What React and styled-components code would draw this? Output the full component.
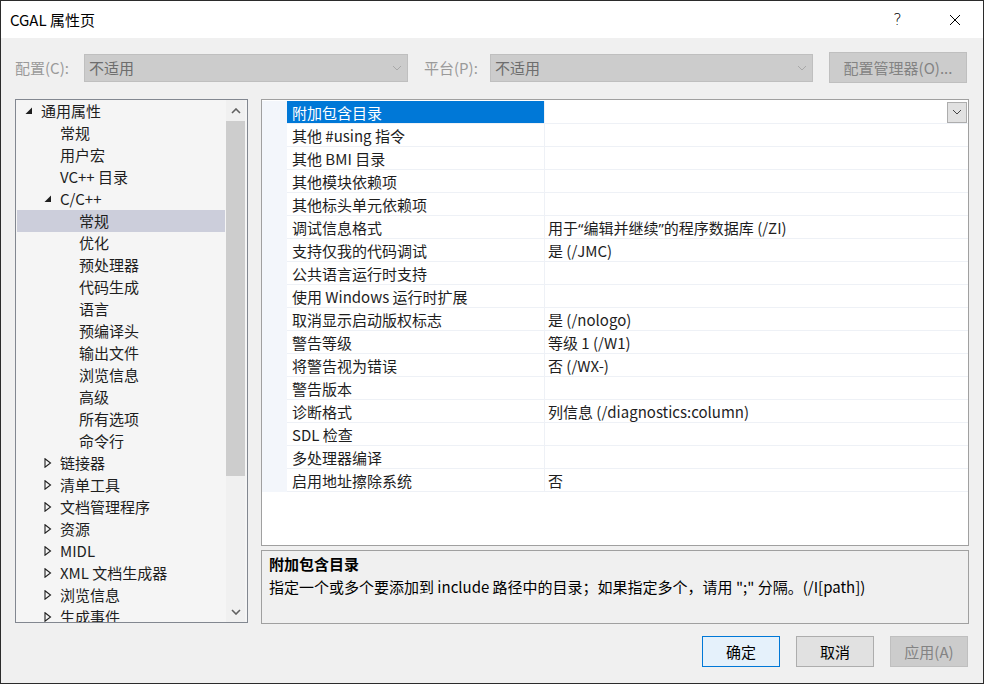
import React from "react";
import styled, { createGlobalStyle } from "styled-components";

const GlobalStyle = createGlobalStyle`
  html, body { margin: 0; padding: 0; }
  body {
    width: 984px;
    height: 684px;
    overflow: hidden;
    background: #f0f0f0;
    font-family: "Noto Sans CJK SC", "Noto Sans", sans-serif;
  }
`;

const treeItems = [
    { text: "通用属性", level: 0, arrow: "open" },
    { text: "常规", level: 1 },
    { text: "用户宏", level: 1 },
    { text: "VC++ 目录", level: 1 },
    { text: "C/C++", level: 1, arrow: "open" },
    { text: "常规", level: 2, selected: true },
    { text: "优化", level: 2 },
    { text: "预处理器", level: 2 },
    { text: "代码生成", level: 2 },
    { text: "语言", level: 2 },
    { text: "预编译头", level: 2 },
    { text: "输出文件", level: 2 },
    { text: "浏览信息", level: 2 },
    { text: "高级", level: 2 },
    { text: "所有选项", level: 2 },
    { text: "命令行", level: 2 },
    { text: "链接器", level: 1, arrow: "closed" },
    { text: "清单工具", level: 1, arrow: "closed" },
    { text: "文档管理程序", level: 1, arrow: "closed" },
    { text: "资源", level: 1, arrow: "closed" },
    { text: "MIDL", level: 1, arrow: "closed" },
    { text: "XML 文档生成器", level: 1, arrow: "closed" },
    { text: "浏览信息", level: 1, arrow: "closed" },
    { text: "生成事件", level: 1, arrow: "closed" },
];

const Q = styled.span`
    font-family: "Noto Sans", sans-serif;
`;

const props = [
    ["附加包含目录", ""],
    ["其他 #using 指令", ""],
    ["其他 BMI 目录", ""],
    ["其他模块依赖项", ""],
    ["其他标头单元依赖项", ""],
    ["调试信息格式", <>用于<Q>“</Q>编辑并继续<Q>”</Q>的程序数据库 (/ZI)</>],
    ["支持仅我的代码调试", "是 (/JMC)"],
    ["公共语言运行时支持", ""],
    ["使用 Windows 运行时扩展", ""],
    ["取消显示启动版权标志", "是 (/nologo)"],
    ["警告等级", "等级 1 (/W1)"],
    ["将警告视为错误", "否 (/WX-)"],
    ["警告版本", ""],
    ["诊断格式", "列信息 (/diagnostics:column)"],
    ["SDL 检查", ""],
    ["多处理器编译", ""],
    ["启用地址擦除系统", "否"],
];

const Chevron = ({ up, color = "#606060", w = 10, h = 6, sw = 1.6 }) => (
    <svg width={w} height={h} viewBox="0 0 10 6">
        <polyline
            points={up ? "1,5 5,1 9,5" : "1,1 5,5 9,1"}
            fill="none"
            stroke={color}
            strokeWidth={sw}
        />
    </svg>
);

const TreeArrow = ({ type }) =>
    type === "open" ? (
        <svg width="8" height="8" viewBox="0 0 8 8">
            <polygon points="7,0.5 7,7 0.5,7" fill="#1e1e1e" />
        </svg>
    ) : (
        <svg width="8" height="10" viewBox="0 0 8 10">
            <polygon points="1,0.8 6.5,5 1,9.2" fill="none" stroke="#1e1e1e" strokeWidth="1.1" />
        </svg>
    );

export default function App() {
    return (
        <>
            <GlobalStyle />
            <Window>
                <TitleBar>
                    <Title>CGAL 属性页</Title>
                    <TitleButton>?</TitleButton>
                    <TitleButton>
                        <svg width="12" height="12" viewBox="0 0 12 12">
                            <path d="M1 1 L11 11 M11 1 L1 11" stroke="#000" strokeWidth="1" />
                        </svg>
                    </TitleButton>
                </TitleBar>
                <Body>
                    <ConfigRow>
                        <ConfigLabel width="69px">配置(C):</ConfigLabel>
                        <Combo width="324px">
                            <span>不适用</span>
                            <Chevron color="#a8a8a8" w={10} h={6} sw={1} />
                        </Combo>
                        <ConfigLabel width="66px" gap="16px">平台(P):</ConfigLabel>
                        <Combo width="323px">
                            <span>不适用</span>
                            <Chevron color="#a8a8a8" w={10} h={6} sw={1} />
                        </Combo>
                        <ManagerButton>配置管理器(O)...</ManagerButton>
                    </ConfigRow>
                    <Main>
                        <Tree>
                            <TreeList>
                                {treeItems.map((it, i) => (
                                    <TreeRow key={i} level={it.level} selected={it.selected}>
                                        <ArrowBox>{it.arrow && <TreeArrow type={it.arrow} />}</ArrowBox>
                                        <span>{it.text}</span>
                                    </TreeRow>
                                ))}
                            </TreeList>
                            <ScrollBar>
                                <ScrollBtn><Chevron up /></ScrollBtn>
                                <ScrollTrack>
                                    <Thumb />
                                </ScrollTrack>
                                <ScrollBtn><Chevron /></ScrollBtn>
                            </ScrollBar>
                        </Tree>
                        <RightColumn>
                            <Grid>
                                {props.map(([name, value], i) => (
                                    <GridRow key={i}>
                                        <Strip />
                                        <NameCell selected={i === 0}>{name}</NameCell>
                                        <ValueCell>
                                            <span>{value}</span>
                                            {i === 0 && (
                                                <DropButton>
                                                    <Chevron color="#444" w={10} h={6} sw={1} />
                                                </DropButton>
                                            )}
                                        </ValueCell>
                                    </GridRow>
                                ))}
                            </Grid>
                            <Description>
                                <DescTitle>附加包含目录</DescTitle>
                                <DescText>指定一个或多个要添加到 include 路径中的目录；如果指定多个，请用 ";" 分隔。(/I[path])</DescText>
                            </Description>
                        </RightColumn>
                    </Main>
                    <ButtonRow>
                        <DialogButton variant="default">确定</DialogButton>
                        <DialogButton>取消</DialogButton>
                        <DialogButton variant="disabled">应用(A)</DialogButton>
                    </ButtonRow>
                </Body>
            </Window>
        </>
    );
}

const Window = styled.div`
    box-sizing: border-box;
    width: 984px;
    height: 684px;
    border: 1px solid #2b2b2b;
    background: #f0f0f0;
    display: flex;
    flex-direction: column;
    font-size: 15px;
    color: #000;
`;

const TitleBar = styled.div`
    height: 37px;
    background: #fff;
    display: flex;
    align-items: center;
    padding-left: 9px;
    flex-shrink: 0;
`;

const Title = styled.div`
    flex: 1;
    font-size: 15px;
    color: #000;
`;

const TitleButton = styled.div`
    width: 57px;
    height: 37px;
    display: flex;
    align-items: center;
    justify-content: center;
    font-family: "DejaVu Sans", sans-serif;
    font-weight: 300;
    font-size: 16px;
    color: #000;
`;

const Body = styled.div`
    flex: 1;
    display: flex;
    flex-direction: column;
    padding: 14px 14px 15px 14px;
`;

const ConfigRow = styled.div`
    display: flex;
    align-items: center;
    height: 31px;
`;

const ConfigLabel = styled.div`
    width: ${p => p.width};
    margin-left: ${p => p.gap || "0"};
    color: #9a9a9a;
    font-size: 15px;
`;

const Combo = styled.div`
    box-sizing: border-box;
    width: ${p => p.width};
    height: 28px;
    background: #cccccc;
    border: 1px solid #bfbfbf;
    display: flex;
    align-items: center;
    justify-content: space-between;
    padding: 0 5px 0 4px;
    color: #6d6d6d;
`;

const ManagerButton = styled.div`
    box-sizing: border-box;
    margin-left: 16px;
    width: 138px;
    height: 31px;
    background: #cccccc;
    border: 1px solid #bfbfbf;
    display: flex;
    align-items: center;
    justify-content: center;
    color: #838383;
`;

const Main = styled.div`
    display: flex;
    gap: 13px;
    margin-top: 16px;
    height: 526px;
    align-items: flex-start;
`;

const Tree = styled.div`
    box-sizing: border-box;
    width: 233px;
    height: 524px;
    border: 1px solid #828790;
    background: #f5f5f5;
    display: flex;
    overflow: hidden;
`;

const TreeList = styled.div`
    flex: 1;
    padding: 0 1px;
    overflow: hidden;
`;

const TreeRow = styled.div`
    box-sizing: border-box;
    height: 22px;
    display: flex;
    align-items: center;
    padding-left: ${p => 8 + p.level * 19}px;
    padding-bottom: 2px;
    background: ${p => (p.selected ? "#cccedb" : "transparent")};
    color: #1e1e1e;
    white-space: nowrap;
`;

const ArrowBox = styled.div`
    width: 16px;
    display: flex;
    align-items: center;
    flex-shrink: 0;
    padding-top: 2px;
`;

const ScrollBar = styled.div`
    width: 19px;
    margin-right: 2px;
    display: flex;
    flex-direction: column;
    background: #f0f0f0;
`;

const ScrollBtn = styled.div`
    height: 21px;
    display: flex;
    align-items: center;
    justify-content: center;
`;

const ScrollTrack = styled.div`
    flex: 1;
`;

const Thumb = styled.div`
    height: 355px;
    background: #cdcdcd;
`;

const RightColumn = styled.div`
    width: 708px;
    display: flex;
    flex-direction: column;
    gap: 4px;
`;

const Grid = styled.div`
    box-sizing: border-box;
    height: 447px;
    border: 1px solid #a0a0a0;
    background: #fff;
    padding-top: 1px;
`;

const GridRow = styled.div`
    display: grid;
    grid-template-columns: 25px 258px 1fr;
    height: 23px;
    box-sizing: border-box;
    border-bottom: 1px solid #eef1f6;
`;

const Strip = styled.div`
    background: #f3f6fb;
    margin-bottom: -1px;
`;

const NameCell = styled.div`
    display: flex;
    align-items: center;
    padding-left: 5px;
    border-right: 1px solid #eef1f6;
    background: ${p => (p.selected ? "#0078d7" : "transparent")};
    color: ${p => (p.selected ? "#fff" : "#1e1e1e")};
    white-space: nowrap;
`;

const ValueCell = styled.div`
    display: flex;
    align-items: center;
    justify-content: space-between;
    padding-left: 3px;
    color: #1e1e1e;
    white-space: nowrap;
`;

const DropButton = styled.div`
    box-sizing: border-box;
    width: 20px;
    height: 21px;
    margin-right: 1px;
    background: #e1e1e1;
    border: 1px solid #adadad;
    display: flex;
    align-items: center;
    justify-content: center;
`;

const Description = styled.div`
    box-sizing: border-box;
    height: 74px;
    border: 1px solid #a0a0a0;
    background: #f0f0f0;
    padding: 2px 7px;
`;

const DescTitle = styled.div`
    font-weight: bold;
    line-height: 22px;
    color: #000;
`;

const DescText = styled.div`
    line-height: 24px;
    color: #000;
`;

const ButtonRow = styled.div`
    display: flex;
    justify-content: flex-end;
    gap: 16px;
    margin-top: 11px;
    padding-right: 1px;
`;

const DialogButton = styled.div`
    box-sizing: border-box;
    width: 78px;
    height: 31px;
    display: flex;
    align-items: center;
    justify-content: center;
    border: 1px solid
        ${p => (p.variant === "default" ? "#0078d7" : p.variant === "disabled" ? "#bfbfbf" : "#adadad")};
    background: ${p => (p.variant === "default" ? "#e5f1fb" : p.variant === "disabled" ? "#cccccc" : "#e1e1e1")};
    color: ${p => (p.variant === "disabled" ? "#838383" : "#000")};
`;
